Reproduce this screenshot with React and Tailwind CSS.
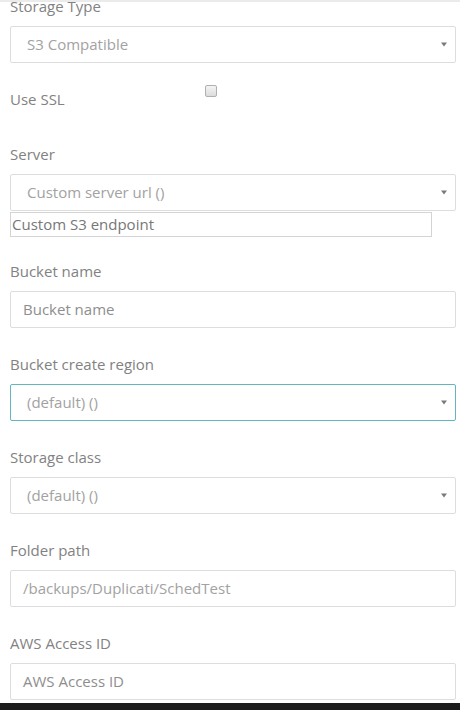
import React from "react";

const font = { fontFamily: '"Open Sans", "Liberation Sans", sans-serif' };

function Label({ children, className = "" }) {
  return (
    <div className={"text-[15px] leading-[20px] text-[#828282] mb-[10px] " + className}>
      {children}
    </div>
  );
}

function Caret() {
  return (
    <svg width="6" height="5" viewBox="0 0 6 5" className="shrink-0">
      <path d="M0 0.5 L6 0.5 L3 4.5 Z" fill="#7a7a7a" />
    </svg>
  );
}

function SelectBox({ text, focused = false }) {
  return (
    <div
      className={
        "h-[37px] w-[446px] rounded-[2px] border bg-white flex items-center justify-between pl-[16px] pr-[8px] " +
        (focused ? "border-[#63b6bd]" : "border-[#dddddd]")
      }
    >
      <span className="text-[15px] text-[#a2a2a2]">{text}</span>
      <Caret />
    </div>
  );
}

function TextBox({ text, color = "text-[#a2a2a2]" }) {
  return (
    <div className="h-[37px] w-[446px] rounded-[2px] border border-[#dddddd] bg-white flex items-center pl-[12px]">
      <span className={"text-[15px] " + color}>{text}</span>
    </div>
  );
}

export default function App() {
  return (
    <div className="relative w-[460px] h-[710px] overflow-hidden bg-white" style={font}>
      <div className="relative z-10 h-[2px] bg-[#ebebeb]" />
      <div className="-mt-[6px] pl-[10px]">
        <Label>Storage Type</Label>
        <SelectBox text="S3 Compatible" />

        <div className="mt-[26px] flex items-start">
          <div className="w-[195px] text-[15px] leading-[20px] text-[#828282]">Use SSL</div>
          <div className="-mt-[4px] h-[12px] w-[12px] rounded-[2px] border border-[#b0b0b0] bg-gradient-to-b from-[#f4f4f4] to-[#dcdcdc]" />
        </div>

        <Label className="mt-[35px]">Server</Label>
        <SelectBox text="Custom server url ()" />
        <div className="mt-[1px] h-[25px] w-[422px] border border-[#d4d4d4] bg-white flex items-center pl-[1px]">
          <span className="text-[15px] text-[#777777]">Custom S3 endpoint</span>
        </div>

        <Label className="mt-[24px]">Bucket name</Label>
        <TextBox text="Bucket name" color="text-[#8e8e8e]" />

        <Label className="mt-[26px]">Bucket create region</Label>
        <SelectBox text="(default) ()" focused />

        <Label className="mt-[26px]">Storage class</Label>
        <SelectBox text="(default) ()" />

        <Label className="mt-[26px]">Folder path</Label>
        <TextBox text="/backups/Duplicati/SchedTest" />

        <Label className="mt-[26px]">AWS Access ID</Label>
        <TextBox text="AWS Access ID" color="text-[#8e8e8e]" />
      </div>
      <div className="absolute bottom-0 left-0 right-0 h-[7px] bg-[#1c1c1c]" />
    </div>
  );
}
